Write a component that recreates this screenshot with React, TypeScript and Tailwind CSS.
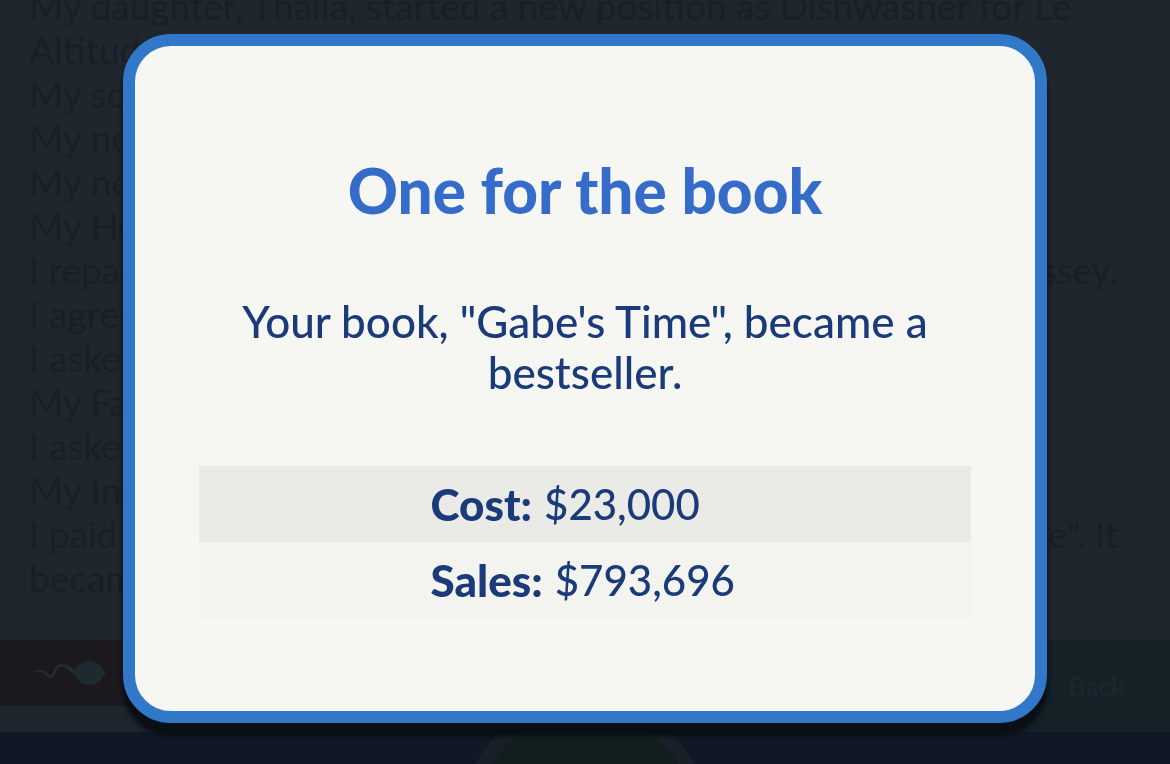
type Stat = { label: string; value: string };

const journal = [
  { start: "My daughter, Thalia, started a new position as Dishwasher for Le" },
  { start: "Altitude." },
  { start: "My son" },
  { start: "My nep" },
  { start: "My nep" },
  { start: "My Ho" },
  { start: "I repaid", end: "Massey." },
  { start: "I agree" },
  { start: "I asked" },
  { start: "My Fat" },
  { start: "I asked" },
  { start: "My Inv" },
  { start: "I paid", end: "Time\". It" },
  { start: "becam" },
];

const stats: Stat[] = [
  { label: "Cost:", value: "$23,000" },
  { label: "Sales:", value: "$793,696" },
];

function SwimmerIcon() {
  return (
    <svg viewBox="0 0 74 30" className="h-[30px] w-[74px]" aria-hidden="true">
      <path
        d="M1 14 L9 14 C13 14 14 20 19 20 C25 20 22 10 29 9 C36 8 38 16 46 17 L46 13 C40 12 37 5 29 6 C20 7 22 17 19 17 C16 17 14 12 9 12 L1 13 Z"
        fill="#272a31"
      />
      <ellipse cx="57" cy="15" rx="14" ry="12" fill="#1d2a31" />
      <path d="M70 11 L74 15 L70 19 Z" fill="#1d2a31" />
    </svg>
  );
}

function Journal() {
  return (
    <ul className="flex flex-1 flex-col justify-end overflow-hidden pb-10 pl-[29px] pr-[52px] text-[37px] leading-[44px] text-[#181f27]">
      {journal.map((line, index) => (
        <li key={index} className="flex h-11 shrink-0 justify-between whitespace-nowrap">
          <span>{line.start}</span>
          {line.end ? <span>{line.end}</span> : null}
        </li>
      ))}
    </ul>
  );
}

function BottomBar() {
  return (
    <footer className="relative shrink-0 overflow-hidden">
      <div className="flex h-[92px]">
        <div className="flex-1 bg-[#1f252d]">
          <div className="flex h-[66px] items-center bg-[#1b191e] pl-8">
            <SwimmerIcon />
          </div>
        </div>
        <button
          type="button"
          className="w-[215px] bg-[#142228] pl-[68px] text-center text-[26px] font-bold text-[#19272e]"
        >
          Back
        </button>
      </div>
      <div className="h-8 bg-[#101826]" />
      <div className="absolute left-1/2 top-[59px] size-[250px] -translate-x-1/2 rounded-full border-[14px] border-[#1a1f29] bg-[#121d1d]" />
    </footer>
  );
}

function EventDialog() {
  return (
    <div className="fixed inset-0 flex items-center justify-center pb-2">
      <div
        role="dialog"
        aria-modal="true"
        aria-labelledby="event-title"
        className="w-[79%] rounded-[48px] border-[12px] border-[#3178c9] bg-[#f6f6f2] px-16 pb-[93px] pt-[114px] text-[#1a3a7a] shadow-[0_12px_4px_1px_#0a0f14]"
      >
        <h1 id="event-title" className="text-center text-[62px] font-black leading-[60px] text-[#356cc9]">
          One for the book
        </h1>
        <p className="mt-[76px] text-center text-[44px] font-medium leading-[51px]">
          Your book, "Gabe's Time", became a bestseller.
        </p>
        <dl className="mt-[68px] text-[42px] leading-[76px]">
          {stats.map((stat) => (
            <div key={stat.label} className="flex gap-3 bg-[#f3f3ef] pl-[30%] odd:bg-[#eaeae7]">
              <dt className="text-[44px] font-black">{stat.label}</dt>
              <dd className="font-medium">{stat.value}</dd>
            </div>
          ))}
        </dl>
      </div>
    </div>
  );
}

export default function App() {
  return (
    <main className="flex h-screen flex-col overflow-hidden bg-[#1f262d] font-['Lato',sans-serif]">
      <Journal />
      <BottomBar />
      <EventDialog />
    </main>
  );
}
